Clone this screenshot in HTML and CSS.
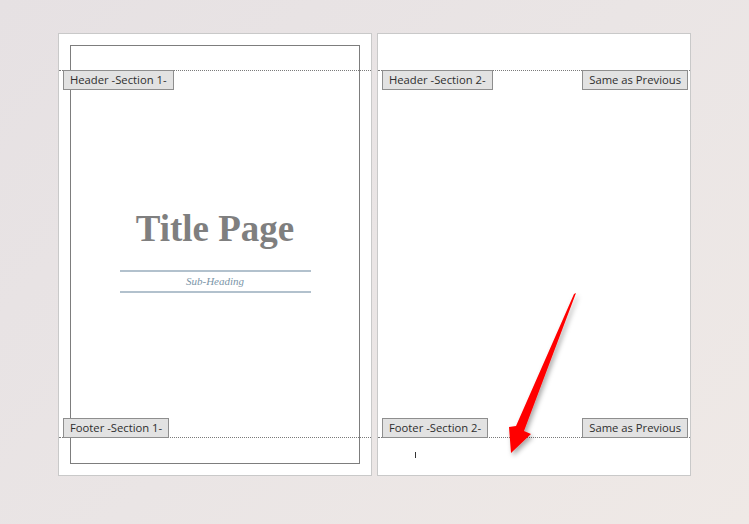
FILE: index.html
```html
<!DOCTYPE html>
<html>
	<head>
		<link rel="stylesheet" href="styles.css">
	</head>
	<body>
		<div class="spread">
			<section class="page page-first">
				<div class="margin-top"></div>
				<div class="hf-row header-row">
					<span class="hf-tab">Header -Section 1-</span>
				</div>
				<main class="page-body">
					<h1 class="title">Title Page</h1>
					<div class="subheading">Sub-Heading</div>
				</main>
				<div class="hf-row footer-row">
					<span class="hf-tab">Footer -Section 1-</span>
				</div>
				<div class="margin-bottom"></div>
			</section>

			<section class="page">
				<div class="margin-top"></div>
				<div class="hf-row header-row">
					<span class="hf-tab">Header -Section 2-</span>
					<span class="hf-tab">Same as Previous</span>
				</div>
				<main class="page-body"></main>
				<div class="hf-row footer-row">
					<span class="hf-tab">Footer -Section 2-</span>
					<span class="hf-tab">Same as Previous</span>
				</div>
				<div class="margin-bottom">
					<span class="caret"></span>
				</div>
			</section>
		</div>

		<svg class="arrow" width="749" height="524" viewBox="0 0 749 524">
			<defs>
				<filter id="shadow" x="-50%" y="-50%" width="200%" height="200%">
					<feDropShadow dx="2" dy="3" stdDeviation="2.5" flood-color="#000" flood-opacity="0.35"/>
				</filter>
			</defs>
			<polygon points="576,293 524,431 531,434 511,453 509,427 516,426 574,294" fill="#ff0000" filter="url(#shadow)"/>
		</svg>
	</body>
</html>
```

FILE: styles.css
```css
body {
	margin: 0;
	padding: 0;
	height: 100vh;
	overflow: hidden;
	font-family: "Segoe UI", "Open Sans", sans-serif;
	background: linear-gradient(135deg, #e6e1e3 0%, #eae5e5 50%, #efe9e6 100%);
}

.spread {
	display: flex;
	gap: 5px;
	padding: 33px 0 0 58px;
}

.page {
	position: relative;
	display: flex;
	flex-direction: column;
	width: 314px;
	height: 443px;
	box-sizing: border-box;
	border: 1px solid #c9c9c9;
	background-color: #fff;
}

/* page border of the title page */
.page-first::before {
	content: "";
	position: absolute;
	top: 11px;
	left: 11px;
	right: 11px;
	bottom: 11px;
	border: 1px solid #7d7d7d;
	pointer-events: none;
}

.margin-top {
	height: 36px;
}
.margin-bottom {
	height: 37px;
}

.hf-row {
	display: flex;
	justify-content: space-between;
	align-items: flex-start;
	height: 19px;
	padding: 0 2px 0 4px;
}
.header-row {
	border-top: 1px dotted #7a7a7a;
}
.header-row .hf-tab {
	margin-top: -1px;
}
.footer-row {
	border-bottom: 1px dotted #7a7a7a;
	align-items: flex-end;
}
.footer-row .hf-tab {
	margin-bottom: -1px;
}

.hf-tab {
	position: relative;
	z-index: 1;
	height: 20px;
	box-sizing: border-box;
	padding: 0 6px;
	line-height: 18px;
	font-size: 11.25px;
	color: #2e2e2e;
	background-color: #e2e2e2;
	border: 1px solid #8e8e8e;
	white-space: nowrap;
}

.page-body {
	flex: 1;
	display: flex;
	flex-direction: column;
	align-items: center;
}

.title {
	margin: 119px 0 0 0;
	font-family: "Liberation Serif", serif;
	font-weight: bold;
	font-size: 37px;
	line-height: 40px;
	color: #7f7f7f;
}

.subheading {
	margin-top: 21px;
	width: 191px;
	height: 19px;
	line-height: 19px;
	border-top: 2px solid #b2c1cd;
	border-bottom: 2px solid #b2c1cd;
	text-align: center;
	font-family: "Liberation Serif", serif;
	font-style: italic;
	font-size: 11px;
	color: #7b95a8;
}

.caret {
	display: block;
	width: 1px;
	height: 6px;
	margin: 14px 0 0 37px;
	background-color: #333;
}

.arrow {
	position: absolute;
	top: 0;
	left: 0;
	pointer-events: none;
}
```
